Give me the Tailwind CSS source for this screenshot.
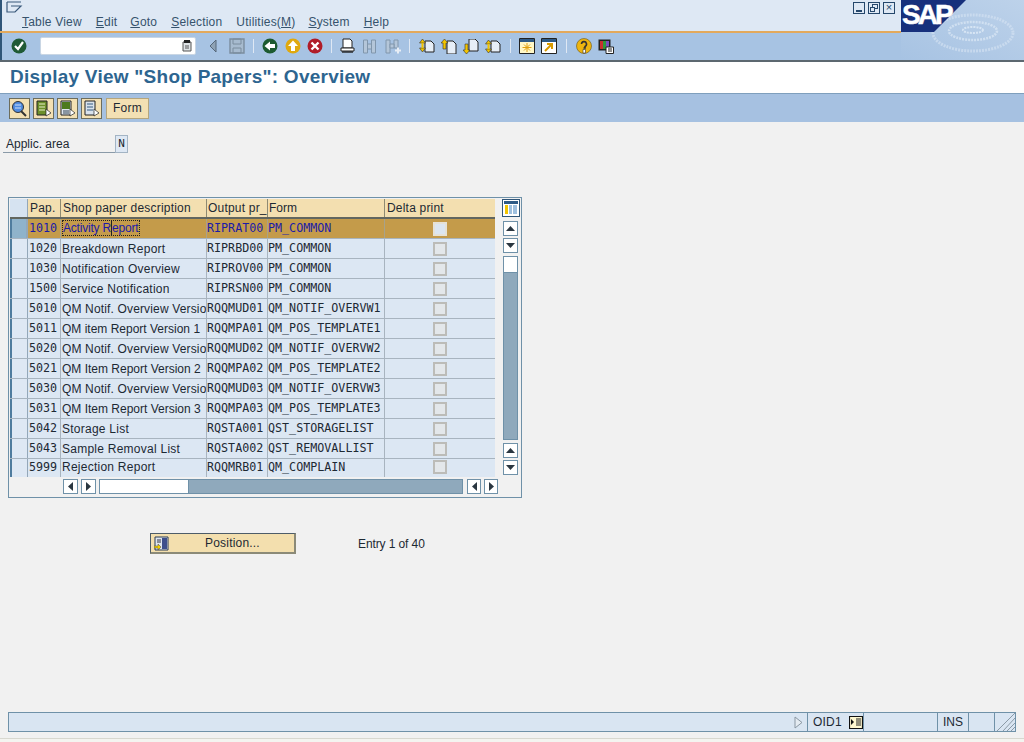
<!DOCTYPE html>
<html lang="en">
<head>
    <meta charset="UTF-8">
    <title>Display View "Shop Papers": Overview</title>
    <script src="https://cdn.jsdelivr.net/npm/@tailwindcss/browser@4"></script>
</head>
<body class="relative w-[1024px] h-[742px] overflow-hidden bg-[#f1f1f1] text-[12px] text-[#1d2933] font-['Liberation_Sans']">

    <!-- Menu bar -->
    <div class="h-[31px] bg-[#dee8f4] border-l-2 border-[#2f5578] relative">
        <svg class="absolute left-[4px] top-[1px]" width="17" height="12" viewBox="0 0 17 12" fill="none" stroke="#39587a" stroke-width="1.2"><path d="M1 1h14M1 1v10h8l6-6H5"/></svg>
        <div class="flex pl-[20px] pt-[13px] text-[#36536c] tracking-[0.2px]">
            <span class="mr-[14px]"><u>T</u>able View</span>
            <span class="mr-[13px]"><u>E</u>dit</span>
            <span class="mr-[14px]"><u>G</u>oto</span>
            <span class="mr-[14px]"><u>S</u>election</span>
            <span class="mr-[13px]">Utilities(<u>M</u>)</span>
            <span class="mr-[14px]"><u>S</u>ystem</span>
            <span><u>H</u>elp</span>
        </div>
    </div>

    <!-- System toolbar -->
    <div class="h-[2px] bg-[#e3a95c]"></div>
    <div class="h-[27px] bg-[#a7c3e3] border-l-2 border-[#2f5578] flex items-center pl-[9px] pb-px">
        <svg width="16" height="16" viewBox="0 0 16 16"><circle cx="8" cy="8" r="7.5" fill="#1f5a35"/><path d="M4 8l3 3 5-7" fill="none" stroke="#fff" stroke-width="2.2"/></svg>
        <div class="ml-[13px] w-[156px] h-[18px] bg-white border border-[#c9d6e4] rounded-[2px] flex items-center justify-end pr-[3px]">
            <svg width="10" height="12" viewBox="0 0 10 12"><path d="M1 2h8v9H1z" fill="#dfe3e6" stroke="#555"/><path d="M2 0h6v3H2z" fill="#222"/><path d="M3 6h4M3 8h4" stroke="#555"/></svg>
        </div>
        <svg class="ml-[12px]" width="10" height="14" viewBox="0 0 10 14"><path d="M8 1v12L2 7z" fill="#8ea2b5" stroke="#56687a"/></svg>
        <svg class="ml-[11px]" width="16" height="16" viewBox="0 0 16 16"><path d="M1 1h14v14H1z" fill="#a7bbcf" stroke="#7b8d9e" stroke-width="1.4"/><path d="M4 1h8v5H4zM4 10h8v5H4z" fill="none" stroke="#7b8d9e"/></svg>
        <div class="ml-[8px] w-px h-[14px] bg-[#dfe8f4]"></div>
        <svg class="ml-[8px]" width="16" height="16" viewBox="0 0 16 16"><circle cx="8" cy="8" r="7.5" fill="#1c5a30"/><path d="M2.5 8L8 3.5V6h5v4H8v2.500z" fill="#fff"/></svg>
        <svg class="ml-[7px]" width="16" height="16" viewBox="0 0 16 16"><circle cx="8" cy="8" r="7.5" fill="#e0a90e"/><path d="M8 2.500L13 8h-3v5H6V8H3z" fill="#fff"/></svg>
        <svg class="ml-[6px]" width="16" height="16" viewBox="0 0 16 16"><circle cx="8" cy="8" r="7.500" fill="#b01c28"/><path d="M4.500 4.500l7 7M11.500 4.500l-7 7" stroke="#fff" stroke-width="2.400"/></svg>
        <div class="ml-[8px] w-px h-[14px] bg-[#dfe8f4]"></div>
        <svg class="ml-[8px]" width="15" height="16" viewBox="0 0 15 16"><path d="M3 1h7l2 2v7H3z" fill="#fff" stroke="#222"/><path d="M1 10h13v3H1z" fill="#fff" stroke="#222"/><path d="M2 14h11" stroke="#222" stroke-width="1.400"/></svg>
        <svg class="ml-[7px]" width="15" height="15" viewBox="0 0 15 15" fill="#b4c6d9" stroke="#8096ac"><path d="M1.500 1h4v13h-4zM9.500 1h4v13h-4z"/><path d="M5.500 5h4v5h-4z"/></svg>
        <svg class="ml-[8px]" width="16" height="15" viewBox="0 0 16 15" fill="#b4c6d9" stroke="#8096ac"><path d="M1 1h4v13H1zM9 1h4v8H9z"/><path d="M5 5h4v4H5z"/><path d="M10 11.500h6M13 8.500v6" stroke="#e8eef5" stroke-width="2"/></svg>
        <div class="ml-[8px] w-px h-[14px] bg-[#dfe8f4]"></div>
        <svg class="ml-[9px]" width="16" height="15" viewBox="0 0 16 15"><path d="M6 2h6l3 3v8H6z" fill="#e6eef7" stroke="#222"/><path d="M3.500 0L6.500 4H.500zM3.500 13L6.500 9H.500z" fill="#f2c400" stroke="#333" stroke-width=".6"/><path d="M2.500 4h2v5h-2z" fill="#f2c400"/></svg>
        <svg class="ml-[6px]" width="16" height="15" viewBox="0 0 16 15"><path d="M6 2h6l3 3v10H6z" fill="#e6eef7" stroke="#222"/><path d="M3.500 0L7 4H5v6H2V4H0z" fill="#f2c400" stroke="#333" stroke-width=".6"/></svg>
        <svg class="ml-[6px]" width="16" height="15" viewBox="0 0 16 15"><path d="M6 0h6l3 3v9H6z" fill="#e6eef7" stroke="#222"/><path d="M3.500 15L7 11H5V5H2v6H0z" fill="#f2c400" stroke="#333" stroke-width=".6"/></svg>
        <svg class="ml-[6px]" width="16" height="15" viewBox="0 0 16 15"><path d="M6 2h6l3 3v8H6z" fill="#e6eef7" stroke="#222"/><path d="M3.500 1L6.500 5H.500zM3.500 14L6.500 10H.500z" fill="#f2c400" stroke="#333" stroke-width=".6"/><path d="M2.500 5h2v5h-2z" fill="#f2c400"/></svg>
        <div class="ml-[9px] w-px h-[14px] bg-[#dfe8f4]"></div>
        <svg class="ml-[8px]" width="16" height="16" viewBox="0 0 16 16"><path d="M.500.500h15v15H.500z" fill="#fff8c8" stroke="#222"/><path d="M1 1h14v3H1z" fill="#2d5a86"/><path d="M8 5v9M3.500 9.500h9M5 6.500l6 6M11 6.500l-6 6" stroke="#e0a010"/></svg>
        <svg class="ml-[6px]" width="16" height="16" viewBox="0 0 16 16"><path d="M.500.500h15v15H.500z" fill="#fff" stroke="#222"/><path d="M1 1h14v3H1z" fill="#2d5a86"/><path d="M4 13l6-6M6 6h5v5" fill="none" stroke="#d89a00" stroke-width="2"/></svg>
        <div class="ml-[9px] w-px h-[14px] bg-[#dfe8f4]"></div>
        <svg class="ml-[9px]" width="16" height="16" viewBox="0 0 16 16"><circle cx="8" cy="8" r="7.500" fill="#eeb50f" stroke="#6b5410" stroke-width=".6"/><path d="M5.500 6a2.500 2.500 0 1 1 3.500 2.400V10H7.500" fill="none" stroke="#333" stroke-width="1.600"/><path d="M7 11.500h2.500V15H7z" fill="#fff" stroke="#333" stroke-width=".6"/></svg>
        <svg class="ml-[6px]" width="16" height="16" viewBox="0 0 16 16"><path d="M.500 1.500h12v11H.500z" fill="#222"/><path d="M2 3h3v8H2z" fill="#c83030"/><path d="M5 3h3v8H5z" fill="#2f9a3a"/><path d="M8 3h3v8H8z" fill="#7a4fc0"/><path d="M8 9h7.500v6.500H8z" fill="#fff" stroke="#222"/><path d="M10 11h4M10 13h4" stroke="#222"/></svg>
    </div>
    <div class="h-[2px] bg-[#5c6870]"></div>

    <!-- SAP logo, lies over the menu and toolbar -->
    <div class="absolute left-[901px] top-0 w-[123px] h-[60px] overflow-hidden bg-[#a9c4e3]">
        <svg class="absolute inset-0" width="123" height="60" viewBox="0 0 123 60">
            <defs><linearGradient id="sky" x1="0" y1="1" x2="1" y2="0"><stop offset="0" stop-color="#a7c3e3"/><stop offset="1" stop-color="#bdd2ea"/></linearGradient></defs>
            <rect width="123" height="60" fill="url(#sky)"/>
            <g fill="none" stroke="#d7e5f4" stroke-dasharray="2 1">
                <ellipse cx="72" cy="30" rx="10" ry="3" stroke-width="2"/>
                <ellipse cx="72" cy="31" rx="24" ry="9" stroke-width="2.500" opacity=".8"/>
                <ellipse cx="72" cy="33" rx="40" ry="18" stroke-width="3" opacity=".6"/>
            </g>
            <path d="M0 0H65L33 32H0z" fill="#17307c"/>
        </svg>
        <span class="absolute left-[1px] top-[-1px] text-[28px] leading-[32px] font-bold text-white tracking-[-3px] [-webkit-text-stroke:0.5px_white]">SAP</span>
    </div>

    <!-- Window buttons -->
    <div class="absolute left-[853px] top-[2px] flex gap-[3px]">
        <div class="w-[12px] h-[12px] border border-[#25476b] bg-[#dee8f4] flex items-end justify-center pb-px"><div class="w-[6px] h-[2px] bg-[#25476b]"></div></div>
        <div class="w-[12px] h-[12px] border border-[#25476b] bg-[#dee8f4] relative"><div class="absolute left-[3px] top-px w-[6px] h-[5px] border border-[#25476b]"></div><div class="absolute left-px top-[4px] w-[5px] h-[5px] border border-[#25476b] bg-[#dee8f4]"></div></div>
        <div class="w-[12px] h-[12px] border border-[#25476b] bg-[#dee8f4] text-[11px] leading-[9px] text-center text-[#25476b]">×</div>
    </div>

    <!-- Title -->
    <div class="h-[31px] bg-white pl-[10px] text-[19px] tracking-[0.25px] leading-[30px] font-bold text-[#2d6590]">Display View "Shop Papers": Overview</div>

    <!-- Application toolbar -->
    <div class="h-[29px] bg-[#a6c1e1] border-t border-[#7f9fbd] flex items-center pl-[9px] gap-[3px]">
        <div class="w-[21px] h-[21px] bg-[#f3e0b3] border border-[#6d6d5c] flex items-center justify-center">
            <svg width="17" height="17" viewBox="0 0 17 17"><circle cx="7" cy="7" r="5.500" fill="#4f8be0" stroke="#333"/><path d="M4 5h6M4 8h6" stroke="#cfe0f8"/><path d="M10 11l5 5" stroke="#333" stroke-width="2"/></svg>
        </div>
        <div class="w-[21px] h-[21px] bg-[#f3e0b3] border border-[#6d6d5c] flex items-center justify-center">
            <svg width="17" height="17" viewBox="0 0 17 17"><path d="M2 1h10v14H2z" fill="#6c8f2a" stroke="#222"/><path d="M4 4h6M4 7h6M4 10h6" stroke="#e8f0c8"/><path d="M11 9l5 4-5 3z" fill="#fff" stroke="#222" stroke-width=".7"/></svg>
        </div>
        <div class="w-[21px] h-[21px] bg-[#f3e0b3] border border-[#6d6d5c] flex items-center justify-center">
            <svg width="17" height="17" viewBox="0 0 17 17"><path d="M2 1h10v14H2z" fill="#dfe6ee" stroke="#222"/><path d="M3 2h8v7H3z" fill="#4d7a1e"/><path d="M4 11h6M4 13h6" stroke="#345"/><path d="M11 9l5 4-5 3z" fill="#fff" stroke="#222" stroke-width=".7"/></svg>
        </div>
        <div class="w-[21px] h-[21px] bg-[#f3e0b3] border border-[#6d6d5c] flex items-center justify-center">
            <svg width="17" height="17" viewBox="0 0 17 17"><path d="M2 1h10v14H2z" fill="#d9e2ec" stroke="#222"/><path d="M4 4h6M4 7h6M4 10h6" stroke="#345a80"/><path d="M11 9l5 4-5 3z" fill="#fff" stroke="#222" stroke-width=".7"/></svg>
        </div>
        <div class="ml-px w-[43px] h-[21px] bg-[#f3e0b3] border border-[#b5a67e] text-center leading-[19px] tracking-[0.300px]">Form</div>
    </div>

    <!-- Applic. area -->
    <div class="flex mt-[13px] ml-[3px] h-[18px]">
        <div class="w-[112px] border-b border-[#8a9aa8] pl-[3px] pt-[2px] leading-[15px]">Applic. area</div>
        <div class="w-[13px] bg-[#dee8f4] border border-[#a3b4c4] font-['DejaVu_Sans_Mono'] text-[11px] leading-[15px] text-center">N</div>
    </div>

    <!-- Table control -->
    <div class="ml-[8px] mt-[44px] w-[514px] h-[301px] border border-[#6f91a8] flex flex-col bg-[#f1f1f1]">
        <div class="flex h-[281px]">
            <div class="w-[485px] ml-px mt-px h-[278px] overflow-hidden whitespace-nowrap">
                <!-- header -->
                <div class="flex h-[20px] border-b-2 border-[#62665f]">
                    <div class="w-[18px] bg-[#d6e3f1] border-r border-[#93a7b9]"></div>
                    <div class="w-[33px] pl-[2px] bg-[#f3dfb0] border-r border-[#8e8a72] leading-[18px] tracking-[0.200px]">Pap.</div>
                    <div class="w-[146px] pl-[2px] bg-[#f3dfb0] border-r border-[#8e8a72] leading-[18px] tracking-[0.200px]">Shop paper description</div>
                    <div class="w-[61px] pl-px bg-[#f3dfb0] border-r border-[#8e8a72] leading-[18px] tracking-[0.200px] overflow-hidden">Output pr_</div>
                    <div class="w-[117px] pl-px bg-[#f3dfb0] border-r border-[#8e8a72] leading-[18px]">Form</div>
                    <div class="w-[110px] pl-[2px] bg-[#f3dfb0] leading-[18px] tracking-[0.200px]">Delta print</div>
                </div>
                <!-- rows -->
                <div class="flex h-[20px] bg-[#c49b4a] border-b border-[#a8b4bf] text-[#1b1ba8]">
                    <div class="w-[18px] bg-[#8fb3cb] border-x-2 border-x-[#4f7c9e] border-r-[#93a7b9]"></div>
                    <div class="w-[33px] pl-px border-r border-[#a8a28a] font-['DejaVu_Sans_Mono'] leading-[18px] text-[11.700px]">1010</div>
                    <div class="w-[146px] pl-px border-r border-[#a8a28a] leading-[18px]"><span class="border border-dotted border-[#222] pr-px tracking-[-0.200px]"><span class="border-r border-[#222]">Activity R</span>eport</span></div>
                    <div class="w-[61px] border-r border-[#a8a28a] font-['DejaVu_Sans_Mono'] leading-[18px] text-[11.700px]">RIPRAT00</div>
                    <div class="w-[117px] border-r border-[#a8a28a] font-['DejaVu_Sans_Mono'] leading-[18px] text-[11.700px]">PM_COMMON</div>
                    <div class="w-[110px] flex justify-center items-center"><div class="w-[14px] h-[14px] bg-[#dce6f0] border-2 border-[#e6e2d6]"></div></div>
                </div>
                <div class="flex h-[20px] bg-[#dce7f3] border-b border-[#a8b4bf]">
                    <div class="w-[18px] bg-[#dee8f4] border-l-2 border-l-[#4f7c9e] border-r border-r-[#93a7b9]"></div>
                    <div class="w-[33px] pl-px border-r border-[#a8b4bf] font-['DejaVu_Sans_Mono'] leading-[19px] text-[11.700px]">1020</div>
                    <div class="w-[146px] pl-px border-r border-[#a8b4bf] leading-[20px] tracking-[0.250px]">Breakdown Report</div>
                    <div class="w-[61px] border-r border-[#a8b4bf] font-['DejaVu_Sans_Mono'] leading-[19px] text-[11.700px]">RIPRBD00</div>
                    <div class="w-[117px] border-r border-[#a8b4bf] font-['DejaVu_Sans_Mono'] leading-[19px] text-[11.700px]">PM_COMMON</div>
                    <div class="w-[110px] flex justify-center items-center"><div class="w-[14px] h-[14px] bg-[#e3e7ea] border-2 border-[#bcbcb8]"></div></div>
                </div>
                <div class="flex h-[20px] bg-[#dce7f3] border-b border-[#a8b4bf]">
                    <div class="w-[18px] bg-[#dee8f4] border-l-2 border-l-[#4f7c9e] border-r border-r-[#93a7b9]"></div>
                    <div class="w-[33px] pl-px border-r border-[#a8b4bf] font-['DejaVu_Sans_Mono'] leading-[19px] text-[11.700px]">1030</div>
                    <div class="w-[146px] pl-px border-r border-[#a8b4bf] leading-[20px] tracking-[0.250px]">Notification Overview</div>
                    <div class="w-[61px] border-r border-[#a8b4bf] font-['DejaVu_Sans_Mono'] leading-[19px] text-[11.700px]">RIPROV00</div>
                    <div class="w-[117px] border-r border-[#a8b4bf] font-['DejaVu_Sans_Mono'] leading-[19px] text-[11.700px]">PM_COMMON</div>
                    <div class="w-[110px] flex justify-center items-center"><div class="w-[14px] h-[14px] bg-[#e3e7ea] border-2 border-[#bcbcb8]"></div></div>
                </div>
                <div class="flex h-[20px] bg-[#dce7f3] border-b border-[#a8b4bf]">
                    <div class="w-[18px] bg-[#dee8f4] border-l-2 border-l-[#4f7c9e] border-r border-r-[#93a7b9]"></div>
                    <div class="w-[33px] pl-px border-r border-[#a8b4bf] font-['DejaVu_Sans_Mono'] leading-[19px] text-[11.700px]">1500</div>
                    <div class="w-[146px] pl-px border-r border-[#a8b4bf] leading-[20px] tracking-[0.250px]">Service Notification</div>
                    <div class="w-[61px] border-r border-[#a8b4bf] font-['DejaVu_Sans_Mono'] leading-[19px] text-[11.700px]">RIPRSN00</div>
                    <div class="w-[117px] border-r border-[#a8b4bf] font-['DejaVu_Sans_Mono'] leading-[19px] text-[11.700px]">PM_COMMON</div>
                    <div class="w-[110px] flex justify-center items-center"><div class="w-[14px] h-[14px] bg-[#e3e7ea] border-2 border-[#bcbcb8]"></div></div>
                </div>
                <div class="flex h-[20px] bg-[#dce7f3] border-b border-[#a8b4bf]">
                    <div class="w-[18px] bg-[#dee8f4] border-l-2 border-l-[#4f7c9e] border-r border-r-[#93a7b9]"></div>
                    <div class="w-[33px] pl-px border-r border-[#a8b4bf] font-['DejaVu_Sans_Mono'] leading-[19px] text-[11.700px]">5010</div>
                    <div class="w-[146px] pl-px border-r border-[#a8b4bf] leading-[20px] tracking-[0.150px] overflow-hidden">QM Notif. Overview Version</div>
                    <div class="w-[61px] border-r border-[#a8b4bf] font-['DejaVu_Sans_Mono'] leading-[19px] text-[11.700px]">RQQMUD01</div>
                    <div class="w-[117px] border-r border-[#a8b4bf] font-['DejaVu_Sans_Mono'] leading-[19px] text-[11.700px]">QM_NOTIF_OVERVW1</div>
                    <div class="w-[110px] flex justify-center items-center"><div class="w-[14px] h-[14px] bg-[#e3e7ea] border-2 border-[#bcbcb8]"></div></div>
                </div>
                <div class="flex h-[20px] bg-[#dce7f3] border-b border-[#a8b4bf]">
                    <div class="w-[18px] bg-[#dee8f4] border-l-2 border-l-[#4f7c9e] border-r border-r-[#93a7b9]"></div>
                    <div class="w-[33px] pl-px border-r border-[#a8b4bf] font-['DejaVu_Sans_Mono'] leading-[19px] text-[11.700px]">5011</div>
                    <div class="w-[146px] pl-px border-r border-[#a8b4bf] leading-[20px]">QM item Report Version 1</div>
                    <div class="w-[61px] border-r border-[#a8b4bf] font-['DejaVu_Sans_Mono'] leading-[19px] text-[11.700px]">RQQMPA01</div>
                    <div class="w-[117px] border-r border-[#a8b4bf] font-['DejaVu_Sans_Mono'] leading-[19px] text-[11.700px]">QM_POS_TEMPLATE1</div>
                    <div class="w-[110px] flex justify-center items-center"><div class="w-[14px] h-[14px] bg-[#e3e7ea] border-2 border-[#bcbcb8]"></div></div>
                </div>
                <div class="flex h-[20px] bg-[#dce7f3] border-b border-[#a8b4bf]">
                    <div class="w-[18px] bg-[#dee8f4] border-l-2 border-l-[#4f7c9e] border-r border-r-[#93a7b9]"></div>
                    <div class="w-[33px] pl-px border-r border-[#a8b4bf] font-['DejaVu_Sans_Mono'] leading-[19px] text-[11.700px]">5020</div>
                    <div class="w-[146px] pl-px border-r border-[#a8b4bf] leading-[20px] tracking-[0.150px] overflow-hidden">QM Notif. Overview Version</div>
                    <div class="w-[61px] border-r border-[#a8b4bf] font-['DejaVu_Sans_Mono'] leading-[19px] text-[11.700px]">RQQMUD02</div>
                    <div class="w-[117px] border-r border-[#a8b4bf] font-['DejaVu_Sans_Mono'] leading-[19px] text-[11.700px]">QM_NOTIF_OVERVW2</div>
                    <div class="w-[110px] flex justify-center items-center"><div class="w-[14px] h-[14px] bg-[#e3e7ea] border-2 border-[#bcbcb8]"></div></div>
                </div>
                <div class="flex h-[20px] bg-[#dce7f3] border-b border-[#a8b4bf]">
                    <div class="w-[18px] bg-[#dee8f4] border-l-2 border-l-[#4f7c9e] border-r border-r-[#93a7b9]"></div>
                    <div class="w-[33px] pl-px border-r border-[#a8b4bf] font-['DejaVu_Sans_Mono'] leading-[19px] text-[11.700px]">5021</div>
                    <div class="w-[146px] pl-px border-r border-[#a8b4bf] leading-[20px]">QM Item Report Version 2</div>
                    <div class="w-[61px] border-r border-[#a8b4bf] font-['DejaVu_Sans_Mono'] leading-[19px] text-[11.700px]">RQQMPA02</div>
                    <div class="w-[117px] border-r border-[#a8b4bf] font-['DejaVu_Sans_Mono'] leading-[19px] text-[11.700px]">QM_POS_TEMPLATE2</div>
                    <div class="w-[110px] flex justify-center items-center"><div class="w-[14px] h-[14px] bg-[#e3e7ea] border-2 border-[#bcbcb8]"></div></div>
                </div>
                <div class="flex h-[20px] bg-[#dce7f3] border-b border-[#a8b4bf]">
                    <div class="w-[18px] bg-[#dee8f4] border-l-2 border-l-[#4f7c9e] border-r border-r-[#93a7b9]"></div>
                    <div class="w-[33px] pl-px border-r border-[#a8b4bf] font-['DejaVu_Sans_Mono'] leading-[19px] text-[11.700px]">5030</div>
                    <div class="w-[146px] pl-px border-r border-[#a8b4bf] leading-[20px] tracking-[0.150px] overflow-hidden">QM Notif. Overview Version</div>
                    <div class="w-[61px] border-r border-[#a8b4bf] font-['DejaVu_Sans_Mono'] leading-[19px] text-[11.700px]">RQQMUD03</div>
                    <div class="w-[117px] border-r border-[#a8b4bf] font-['DejaVu_Sans_Mono'] leading-[19px] text-[11.700px]">QM_NOTIF_OVERVW3</div>
                    <div class="w-[110px] flex justify-center items-center"><div class="w-[14px] h-[14px] bg-[#e3e7ea] border-2 border-[#bcbcb8]"></div></div>
                </div>
                <div class="flex h-[20px] bg-[#dce7f3] border-b border-[#a8b4bf]">
                    <div class="w-[18px] bg-[#dee8f4] border-l-2 border-l-[#4f7c9e] border-r border-r-[#93a7b9]"></div>
                    <div class="w-[33px] pl-px border-r border-[#a8b4bf] font-['DejaVu_Sans_Mono'] leading-[19px] text-[11.700px]">5031</div>
                    <div class="w-[146px] pl-px border-r border-[#a8b4bf] leading-[20px]">QM Item Report Version 3</div>
                    <div class="w-[61px] border-r border-[#a8b4bf] font-['DejaVu_Sans_Mono'] leading-[19px] text-[11.700px]">RQQMPA03</div>
                    <div class="w-[117px] border-r border-[#a8b4bf] font-['DejaVu_Sans_Mono'] leading-[19px] text-[11.700px]">QM_POS_TEMPLATE3</div>
                    <div class="w-[110px] flex justify-center items-center"><div class="w-[14px] h-[14px] bg-[#e3e7ea] border-2 border-[#bcbcb8]"></div></div>
                </div>
                <div class="flex h-[20px] bg-[#dce7f3] border-b border-[#a8b4bf]">
                    <div class="w-[18px] bg-[#dee8f4] border-l-2 border-l-[#4f7c9e] border-r border-r-[#93a7b9]"></div>
                    <div class="w-[33px] pl-px border-r border-[#a8b4bf] font-['DejaVu_Sans_Mono'] leading-[19px] text-[11.700px]">5042</div>
                    <div class="w-[146px] pl-px border-r border-[#a8b4bf] leading-[20px] tracking-[0.250px]">Storage List</div>
                    <div class="w-[61px] border-r border-[#a8b4bf] font-['DejaVu_Sans_Mono'] leading-[19px] text-[11.700px]">RQSTA001</div>
                    <div class="w-[117px] border-r border-[#a8b4bf] font-['DejaVu_Sans_Mono'] leading-[19px] text-[11.700px]">QST_STORAGELIST</div>
                    <div class="w-[110px] flex justify-center items-center"><div class="w-[14px] h-[14px] bg-[#e3e7ea] border-2 border-[#bcbcb8]"></div></div>
                </div>
                <div class="flex h-[20px] bg-[#dce7f3] border-b border-[#a8b4bf]">
                    <div class="w-[18px] bg-[#dee8f4] border-l-2 border-l-[#4f7c9e] border-r border-r-[#93a7b9]"></div>
                    <div class="w-[33px] pl-px border-r border-[#a8b4bf] font-['DejaVu_Sans_Mono'] leading-[19px] text-[11.700px]">5043</div>
                    <div class="w-[146px] pl-px border-r border-[#a8b4bf] leading-[20px] tracking-[0.250px]">Sample Removal List</div>
                    <div class="w-[61px] border-r border-[#a8b4bf] font-['DejaVu_Sans_Mono'] leading-[19px] text-[11.700px]">RQSTA002</div>
                    <div class="w-[117px] border-r border-[#a8b4bf] font-['DejaVu_Sans_Mono'] leading-[19px] text-[11.700px]">QST_REMOVALLIST</div>
                    <div class="w-[110px] flex justify-center items-center"><div class="w-[14px] h-[14px] bg-[#e3e7ea] border-2 border-[#bcbcb8]"></div></div>
                </div>
                <div class="flex h-[20px] bg-[#dce7f3]">
                    <div class="w-[18px] bg-[#dee8f4] border-l-2 border-l-[#4f7c9e] border-r border-r-[#93a7b9]"></div>
                    <div class="w-[33px] pl-px border-r border-[#a8b4bf] font-['DejaVu_Sans_Mono'] leading-[16px] text-[11.700px]">5999</div>
                    <div class="w-[146px] pl-px border-r border-[#a8b4bf] leading-[17px] tracking-[0.250px]">Rejection Report</div>
                    <div class="w-[61px] border-r border-[#a8b4bf] font-['DejaVu_Sans_Mono'] leading-[16px] text-[11.700px]">RQQMRB01</div>
                    <div class="w-[117px] border-r border-[#a8b4bf] font-['DejaVu_Sans_Mono'] leading-[16px] text-[11.700px]">QM_COMPLAIN</div>
                    <div class="w-[110px] flex justify-center pt-px"><div class="w-[14px] h-[14px] bg-[#e3e7ea] border-2 border-[#bcbcb8]"></div></div>
                </div>
            </div>

            <!-- vertical scrollbar -->
            <div class="ml-[7px] mt-px w-[18px] flex flex-col items-start">
                <div class="w-[18px] h-[18px] border border-[#2f5578] bg-white flex items-center justify-center">
                    <svg width="14" height="14" viewBox="0 0 14 14"><path d="M0 0h14v3H0z" fill="#2d5a86"/><path d="M1 4h3v9H1z" fill="#f2c400"/><path d="M5 4h3v9H5zM9 4h4v9H9z" fill="#9fc0df"/></svg>
                </div>
                <div class="ml-px mt-[4px] w-[15px] h-[15px] border border-[#6f91a8] bg-white flex items-center justify-center"><svg width="9" height="5" viewBox="0 0 9 5"><path d="M4.500 0L9 5H0z" fill="#2a3640"/></svg></div>
                <div class="ml-px mt-[2px] w-[15px] h-[15px] border border-[#6f91a8] bg-white flex items-center justify-center"><svg width="9" height="5" viewBox="0 0 9 5"><path d="M0 0h9L4.500 5z" fill="#2a3640"/></svg></div>
                <div class="ml-px mt-[3px] w-[15px] h-[17px] border border-[#6f91a8] bg-white"></div>
                <div class="ml-px w-[15px] h-[167px] bg-[#8fa9bc] border-x border-b border-[#6f91a8]"></div>
                <div class="ml-px mt-[3px] w-[15px] h-[15px] border border-[#6f91a8] bg-white flex items-center justify-center"><svg width="9" height="5" viewBox="0 0 9 5"><path d="M4.500 0L9 5H0z" fill="#2a3640"/></svg></div>
                <div class="ml-px mt-[2px] w-[15px] h-[15px] border border-[#6f91a8] bg-white flex items-center justify-center"><svg width="9" height="5" viewBox="0 0 9 5"><path d="M0 0h9L4.500 5z" fill="#2a3640"/></svg></div>
            </div>
        </div>

        <!-- horizontal scrollbar -->
        <div class="flex ml-[54px]">
            <div class="w-[15px] h-[15px] border border-[#6f91a8] bg-white flex items-center justify-center"><svg width="5" height="9" viewBox="0 0 5 9"><path d="M5 0v9L0 4.500z" fill="#2a3640"/></svg></div>
            <div class="ml-[3px] w-[15px] h-[15px] border border-[#6f91a8] bg-white flex items-center justify-center"><svg width="5" height="9" viewBox="0 0 5 9"><path d="M0 0v9l5-4.500z" fill="#2a3640"/></svg></div>
            <div class="ml-[3px] w-[90px] h-[15px] border border-[#6f91a8] bg-white"></div>
            <div class="w-[274px] h-[15px] bg-[#8fa9bc] border-y border-r border-[#6f91a8]"></div>
            <div class="ml-[4px] w-[14px] h-[15px] border border-[#6f91a8] bg-white flex items-center justify-center"><svg width="5" height="9" viewBox="0 0 5 9"><path d="M5 0v9L0 4.500z" fill="#2a3640"/></svg></div>
            <div class="ml-[3px] w-[14px] h-[15px] border border-[#6f91a8] bg-white flex items-center justify-center"><svg width="5" height="9" viewBox="0 0 5 9"><path d="M0 0v9l5-4.500z" fill="#2a3640"/></svg></div>
        </div>
    </div>

    <!-- Position button -->
    <div class="flex items-center mt-[35px] ml-[150px] h-[21px]">
        <div class="w-[146px] h-[21px] bg-[#f3dfae] border border-[#4d5c68] border-r-2 border-b-2 border-r-[#8b8a78] border-b-[#8b8a78] flex items-center relative">
            <svg class="ml-[3px]" width="15" height="15" viewBox="0 0 15 15"><path d="M1 1h13v13H1z" fill="#dfe6ee" stroke="#2a3a55"/><path d="M8 2h5v11H8z" fill="#3e4f8c"/><path d="M3 4h4M3 6h4" stroke="#334"/><path d="M0 10h4V8l3 3-3 3v-2H0z" fill="#f2d000" stroke="#444" stroke-width=".5"/></svg>
            <span class="absolute left-[54px] top-[1px] leading-[17px] tracking-[0.200px]">Position...</span>
        </div>
        <span class="ml-[62px] tracking-[-0.100px]">Entry 1 of 40</span>
    </div>

    <!-- Status bar -->
    <div class="absolute left-[8px] top-[712px] w-[1008px] h-[20px] bg-[#d9e5f2] border border-[#6f91a8] flex items-center justify-end">
        <svg class="mr-[4px]" width="9" height="13" viewBox="0 0 9 13"><path d="M1 1l7 5.500-7 5.500z" fill="#e4ebf2" stroke="#8a97a3"/></svg>
        <div class="w-[57px] h-full border-x border-[#6f91a8] flex items-center pl-[5px]">
            <span class="tracking-[0.200px]">OID1</span>
            <svg class="ml-[7px]" width="14" height="13" viewBox="0 0 14 13"><path d="M.500.500h13v12H.500z" fill="#fff8d0" stroke="#111" stroke-width="1.200"/><path d="M2 3l3 3-3 3z" fill="#111"/><path d="M7 3h5M7 5h5M7 7h5M7 9h5" stroke="#222"/></svg>
        </div>
        <div class="w-[73px] h-full"></div>
        <div class="w-[32px] h-full border-x border-[#6f91a8] text-center leading-[18px]">INS</div>
        <div class="w-[25px] h-full"></div>
        <div class="w-[21px] h-full border-l border-[#6f91a8] overflow-hidden">
            <svg width="20" height="18" viewBox="0 0 20 18" stroke="#8b9aa6"><path d="M2 18L20 0M8 18L20 5M12 18l8-8M16 18l4-4" fill="none"/></svg>
        </div>
    </div>
    <div class="absolute left-0 top-[738px] w-full h-[1px] bg-[#d8d8d0]"></div>
    <div class="absolute left-0 top-[739px] w-full h-[3px] bg-[#f4f4f0]"></div>
</body>
</html>
